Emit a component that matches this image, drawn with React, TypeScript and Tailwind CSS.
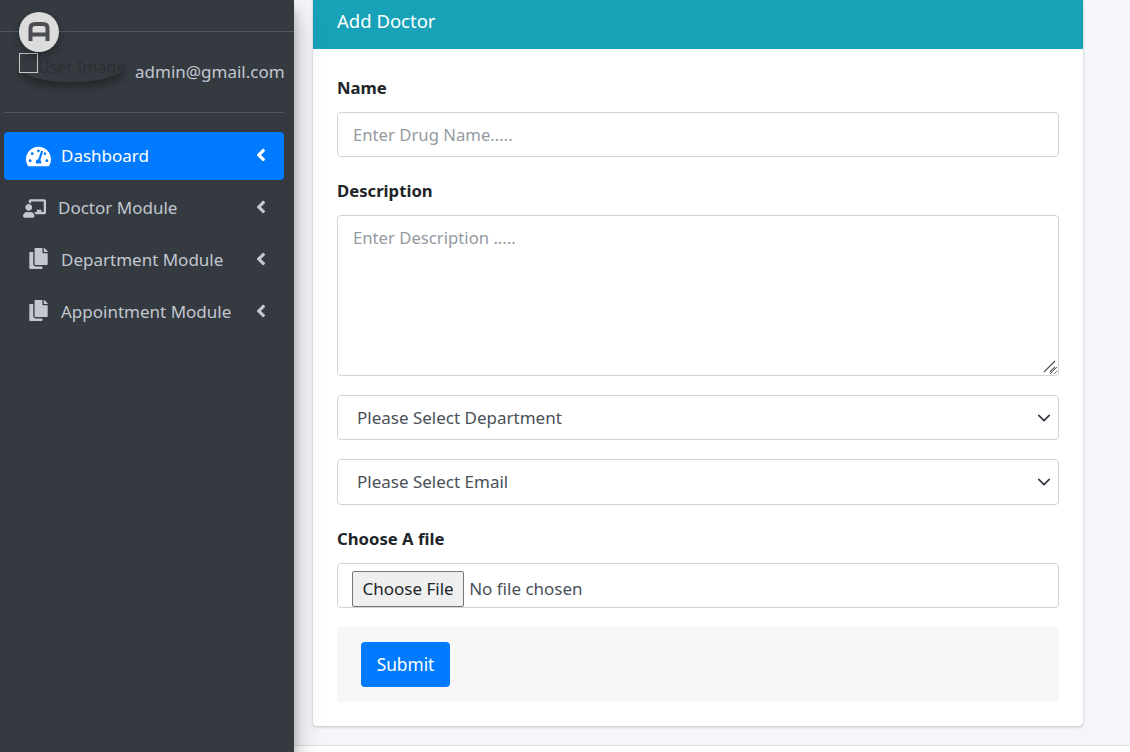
import { FaAngleLeft, FaChalkboardTeacher, FaCopy, FaTachometerAlt } from 'react-icons/fa'

const MENU = [
  { label: 'Doctor Module', icon: <FaChalkboardTeacher className="text-[23px]" />, iconBox: 'w-[36px] pl-[1px]' },
  { label: 'Department Module', icon: <FaCopy className="mb-[3px] text-[21px]" />, iconBox: 'w-[39px] pl-[6px]' },
  { label: 'Appointment Module', icon: <FaCopy className="mb-[3px] text-[21px]" />, iconBox: 'w-[39px] pl-[6px]' },
]

function SelectBox({ label, className }: { label: string; className: string }) {
  return (
    <div className={`relative ${className}`}>
      <select className="h-full w-full appearance-none rounded border border-[#ced4da] bg-white pl-[19px] pr-10 text-[17px] text-[#495057] outline-none">
        <option>{label}</option>
      </select>
      <svg className="pointer-events-none absolute right-[8px] top-1/2 h-[14px] w-[14px] -translate-y-1/2" viewBox="0 0 16 16" fill="none">
        <path d="M2 5l6 6 6-6" stroke="#343a40" strokeWidth="2" strokeLinecap="round" strokeLinejoin="round" />
      </svg>
    </div>
  )
}

export default function App() {
  return (
    <div className="flex h-[752px] w-[1130px] overflow-hidden bg-[#f4f6f9] font-['Noto_Sans','Liberation_Sans',sans-serif] text-[16.7px]">
      <aside className="relative z-10 h-full w-[294px] shrink-0 bg-[#343a40] shadow-[0_14px_28px_rgba(0,0,0,0.25),0_10px_10px_rgba(0,0,0,0.22)]">
        <div className="mt-[31px] border-t border-[#4f5962]" />

        {/* logo */}
        <div className="absolute left-[19px] top-[12px] z-10 flex h-10 w-10 items-center justify-center rounded-full bg-[#dcdcdc] shadow-[0_4px_8px_rgba(0,0,0,0.3)]">
          <svg viewBox="0 0 24 24" className="h-[24px] w-[24px]" fill="none">
            <path d="M3.500 21V8C3.500 5 5 4 8 4h8c3 0 4.500 1 4.500 4V21M3.500 14.500h17" stroke="#4a4d52" strokeWidth="4" />
          </svg>
        </div>

        <div className="mx-[4px] flex h-[81px] w-[280px] items-start overflow-hidden border-b border-[#4f5962] pt-[21px]">
          <div className="ml-[15px] flex h-[29px] w-[105px] shrink-0 rounded-[50%] shadow-[0_5px_8px_rgba(0,0,0,0.35)]">
            <span className="h-[20px] w-[19px] shrink-0 border border-[#c8c8c8]" />
            <span className="mt-[2px] whitespace-nowrap text-[16px] leading-[24px] text-[#2b2f33]">User Image</span>
          </div>
          <span className="ml-[11px] mt-[7px] whitespace-nowrap text-[17px] leading-[24px] text-[#c2c7d0]">admin@gmail.com</span>
        </div>

        <nav className="mx-[4px] mt-[19px] w-[280px]">
          <a className="flex h-[48px] items-center rounded bg-[#007bff] pl-[22px] pr-[13px] text-white">
            <span className="w-[35px]"><FaTachometerAlt className="text-[25px]" /></span>
            <span className="flex-1 text-[17px]">Dashboard</span>
            <FaAngleLeft className="mb-[3px] text-[20px]" />
          </a>
          {MENU.map((item) => (
            <a key={item.label} className="mt-[4px] flex h-[48px] items-center pl-[18px] pr-[13px] text-[#c2c7d0]">
              <span className={item.iconBox}>{item.icon}</span>
              <span className="mb-[1px] flex-1 text-[17px]">{item.label}</span>
              <FaAngleLeft className="mb-[3px] text-[20px]" />
            </a>
          ))}
        </nav>
      </aside>

      <main className="flex min-w-0 flex-1 flex-col">
        <div className="ml-[19px] mr-[47px] h-[726px] rounded-b bg-white shadow-[0_0_1px_rgba(0,0,0,0.13),0_1px_3px_rgba(0,0,0,0.2)]">
          <div className="flex h-[49px] items-center bg-[#17a2b8] px-6 pb-[8px] text-[18.5px] text-white">Add Doctor</div>
          <form className="px-6 pt-[26px]">
            <label className="block h-[25px] font-bold leading-[25px] text-[#212529]">Name</label>
            <input
              className="mt-[12px] block h-[45px] w-full rounded border border-[#ced4da] px-[15px] text-[#495057] outline-none placeholder:text-[#939ba2]"
              placeholder="Enter Drug Name....."
            />
            <label className="mt-[21px] block h-[25px] font-bold leading-[25px] text-[#212529]">Description</label>
            <div className="relative mt-[12px]">
              <textarea
                className="block h-[161px] w-full rounded border border-[#ced4da] px-[15px] py-[9px] text-[#495057] outline-none placeholder:text-[#939ba2]"
                placeholder="Enter Description ....."
              />
              <svg className="pointer-events-none absolute bottom-[3px] right-[3px] h-[13px] w-[13px]" viewBox="0 0 13 13" fill="none">
                <path d="M1 12L12 1M7 12l5-5" stroke="#555" strokeWidth="1.200" />
              </svg>
            </div>
            <SelectBox label="Please Select Department" className="mt-[19px] h-[45px]" />
            <SelectBox label="Please Select Email" className="mt-[19px] h-[46px]" />
            <label className="mt-[21px] block h-[25px] font-bold leading-[25px] text-[#212529]">Choose A file</label>
            <div className="mt-[12px] h-[45px] overflow-hidden rounded border border-[#ced4da] pl-[14px] pt-[7px] text-[#495057]">
              <input type="file" className="w-full text-[17px] file:mr-[5px] file:h-[36px] file:rounded-[2px] file:border file:border-[#767676] file:bg-[#efefef] file:px-[9.500px] file:text-[#212529]" />
            </div>
            <div className="mt-[19px] flex h-[75px] items-center bg-[#f7f7f7] px-6">
              <button type="button" className="h-[45px] w-[89px] rounded bg-[#007bff] text-[17.300px] text-white">Submit</button>
            </div>
          </form>
        </div>
        <div className="mt-[19px] flex-1 border-t border-[#dee2e6] bg-white" />
      </main>
    </div>
  )
}
